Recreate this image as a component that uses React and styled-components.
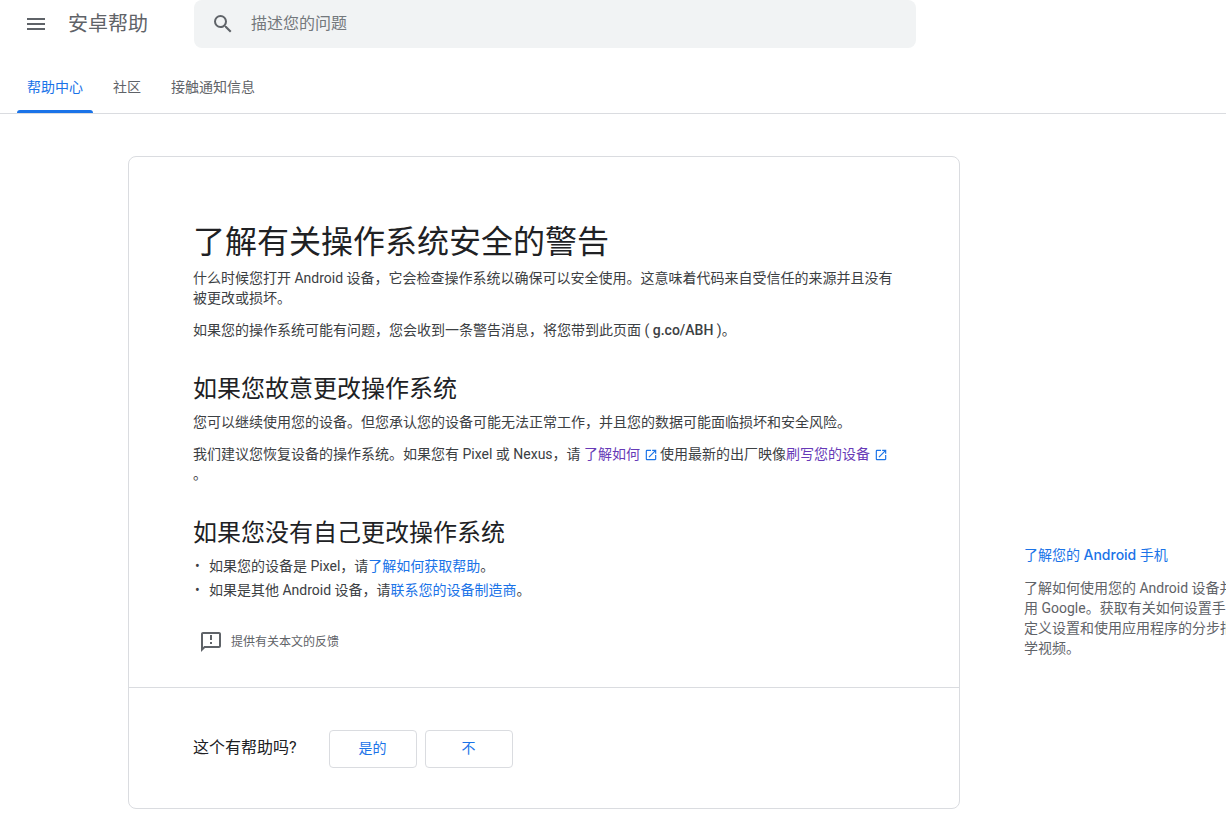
import React from "react";
import styled, { createGlobalStyle } from "styled-components";

const GlobalStyle = createGlobalStyle`
  *, *::before, *::after { box-sizing: border-box; }
  body {
    margin: 0;
    background: #fff;
    color: #3c4043;
    font-family: Roboto, "Noto Sans CJK SC", sans-serif;
    font-size: 14px;
    line-height: 20px;
  }
  h1, h2, h3, p, ul { margin: 0; padding: 0; font-weight: 400; }
  a { color: #1a73e8; text-decoration: none; }
  button, input { font: inherit; }
`;

const Header = styled.header`
  display: flex;
  align-items: center;
  height: 48px;
  padding-left: 24px;
`;

const IconButton = styled.button`
  display: flex;
  padding: 0;
  border: 0;
  background: none;
  color: #5f6368;
`;

const Brand = styled.a`
  margin: 0 46px 0 20px;
  color: #5f6368;
  font-size: 20px;
  line-height: 24px;
  white-space: nowrap;
`;

const SearchForm = styled.form`
  display: flex;
  flex: 0 1 722px;
  align-items: center;
  gap: 16px;
  height: 48px;
  padding: 0 17px;
  border-radius: 8px;
  background: #f1f3f4;
`;

const SearchInput = styled.input`
  flex: 1;
  min-width: 0;
  padding: 0;
  border: 0;
  outline: 0;
  background: none;
  color: #202124;
  font-size: 16px;
  line-height: 24px;
  &::placeholder { color: #74787c; opacity: 1; }
`;

const Tabs = styled.nav`
  display: flex;
  gap: 10px;
  height: 66px;
  padding: 12px 17px 0;
  border-bottom: 1px solid #dadce0;
`;

const Tab = styled.a`
  display: flex;
  align-items: center;
  flex-direction: column;
  justify-content: space-between;
  padding-top: 17px;
  color: ${({ $active }) => ($active ? "#1a73e8" : "#5f6368")};
  &::after {
    content: "";
    width: 100%;
    height: 3px;
    border-radius: 3px 3px 0 0;
    background: ${({ $active }) => ($active ? "#1a73e8" : "transparent")};
  }
  span { padding: 0 10px; }
`;

const Layout = styled.div`
  display: flex;
  align-items: flex-start;
  gap: 64px;
  padding: 42px 0 18px 128px;
`;

const Card = styled.main`
  flex: 1;
  min-width: 0;
  border: 1px solid #dadce0;
  border-radius: 8px;
`;

const Article = styled.article`
  padding: 65px 64px 33px;
`;

const Title = styled.h1`
  && { margin-bottom: 6px; }
  color: #202124;
  font-size: 32px;
  line-height: 40px;
`;

const Subtitle = styled.h2`
  && { margin: 33px 0 7px; }
  color: #202124;
  font-size: 24px;
  line-height: 32px;
`;

const Paragraph = styled.p`
  & + & { margin-top: 12px; }
  b { font-weight: 500; }
`;

const VisitedLink = styled.a`
  color: #673ab7;
`;

const LinkIcon = styled.svg`
  display: inline-block;
  width: 14px;
  height: 14px;
  margin-right: -1px;
  vertical-align: -3px;
  fill: #1a73e8;
`;

const List = styled.ul`
  display: grid;
  gap: 4px;
  list-style: none;
`;

const ListItem = styled.li`
  display: flex;
  &::before {
    content: "•";
    flex: 0 0 16px;
    padding-left: 2px;
  }
`;

const FeedbackButton = styled.button`
  display: flex;
  align-items: center;
  gap: 8px;
  margin-top: 30px;
  padding: 0 6px;
  border: 0;
  background: none;
  color: #5f6368;
  font-size: 12px;
  line-height: 24px;
`;

const Survey = styled.section`
  display: flex;
  align-items: center;
  gap: 8px;
  padding: 42px 64px 40px;
  border-top: 1px solid #dadce0;
`;

const Question = styled.h3`
  && { margin: 0 24px 2px 0; }
  color: #202124;
  font-size: 16px;
  line-height: 24px;
`;

const AnswerButton = styled.button`
  width: 88px;
  height: 38px;
  padding: 0 0 2px;
  border: 1px solid #dadce0;
  border-radius: 4px;
  background: #fff;
  color: #1a73e8;
`;

const Sidebar = styled.aside`
  flex: 0 0 202px;
  margin-top: 389px;
  overflow: hidden;
  color: #5f6368;
  white-space: nowrap;
`;

const SidebarTitle = styled.h3`
  && { margin-bottom: 13px; }
  font-size: 14px;
  span { font-family: Inter, sans-serif; font-weight: 500; }
`;

function Icon({ d }) {
  return (
    <svg width="24" height="24" viewBox="0 0 24 24" fill="currentColor" aria-hidden="true">
      <path d={d} />
    </svg>
  );
}

const icons = {
  menu: "M3 18h18v-2H3v2zm0-5h18v-2H3v2zm0-7v2h18V6H3z",
  search:
    "M15.5 14h-.79l-.28-.27A6.47 6.47 0 0 0 16 9.5 6.5 6.5 0 1 0 9.5 16c1.61 0 3.09-.59 4.23-1.57l.27.28v.79l5 4.99L20.49 19l-4.99-5zm-6 0C7.01 14 5 11.99 5 9.5S7.01 5 9.5 5 14 7.01 14 9.5 11.99 14 9.5 14z",
  feedback:
    "M20 2H4c-1.100 0-1.990.9-1.990 2L2 22l4-4h14c1.100 0 2-.9 2-2V4c0-1.100-.9-2-2-2zm0 14H5.170L4 17.170V4h16v12zM11 12h2v2h-2zm0-7h2v5h-2z",
};

function ExternalIcon() {
  return (
    <LinkIcon viewBox="0 0 24 24" aria-hidden="true">
      <path d="M19 19H5V5h7V3H5a2 2 0 0 0-2 2v14a2 2 0 0 0 2 2h14c1.100 0 2-.9 2-2v-7h-2v7zM14 3v2h3.590l-9.830 9.830 1.410 1.410L19 6.410V10h2V3h-7z" />
    </LinkIcon>
  );
}

export default function App() {
  return (
    <>
      <GlobalStyle />
      <Header>
        <IconButton type="button" aria-label="主菜单">
          <Icon d={icons.menu} />
        </IconButton>
        <Brand href="#home">安卓帮助</Brand>
        <SearchForm role="search">
          <IconButton type="button" aria-label="搜索">
            <Icon d={icons.search} />
          </IconButton>
          <SearchInput type="text" aria-label="描述您的问题" placeholder="描述您的问题" />
        </SearchForm>
      </Header>
      <Tabs>
        <Tab href="#help" $active><span>帮助中心</span></Tab>
        <Tab href="#community"><span>社区</span></Tab>
        <Tab href="#notifications"><span>接触通知信息</span></Tab>
      </Tabs>
      <Layout>
        <Card>
          <Article>
            <Title>了解有关操作系统安全的警告</Title>
            <Paragraph>
              什么时候您打开 Android 设备，它会检查操作系统以确保可以安全使用。这意味着代码来自受信任的来源并且没有被更改或损坏。
            </Paragraph>
            <Paragraph>
              如果您的操作系统可能有问题，您会收到一条警告消息，将您带到此页面 ( <b>g.co/ABH</b> )。
            </Paragraph>
            <Subtitle>如果您故意更改操作系统</Subtitle>
            <Paragraph>
              您可以继续使用您的设备。但您承认您的设备可能无法正常工作，并且您的数据可能面临损坏和安全风险。
            </Paragraph>
            <Paragraph>
              我们建议您恢复设备的操作系统。如果您有 Pixel 或 Nexus，请{" "}
              <VisitedLink href="#learn">了解如何 <ExternalIcon /></VisitedLink>{" "}
              使用最新的出厂映像<VisitedLink href="#flash">刷写您的设备 <ExternalIcon /></VisitedLink>
              <br />。
            </Paragraph>
            <Subtitle>如果您没有自己更改操作系统</Subtitle>
            <List>
              <ListItem>
                <span>如果您的设备是 Pixel，请<a href="#support">了解如何获取帮助</a>。</span>
              </ListItem>
              <ListItem>
                <span>如果是其他 Android 设备，请<a href="#manufacturer">联系您的设备制造商</a>。</span>
              </ListItem>
            </List>
            <FeedbackButton type="button">
              <Icon d={icons.feedback} />
              提供有关本文的反馈
            </FeedbackButton>
          </Article>
          <Survey>
            <Question>这个有帮助吗?</Question>
            <AnswerButton type="button">是的</AnswerButton>
            <AnswerButton type="button">不</AnswerButton>
          </Survey>
        </Card>
        <Sidebar>
          <SidebarTitle>
            <a href="#phone">了解您的 <span>Android</span> 手机</a>
          </SidebarTitle>
          <p>
            了解如何使用您的 Android 设备并
            <br />
            用 Google。获取有关如何设置手
            <br />
            定义设置和使用应用程序的分步指
            <br />
            学视频。
          </p>
        </Sidebar>
      </Layout>
    </>
  );
}
